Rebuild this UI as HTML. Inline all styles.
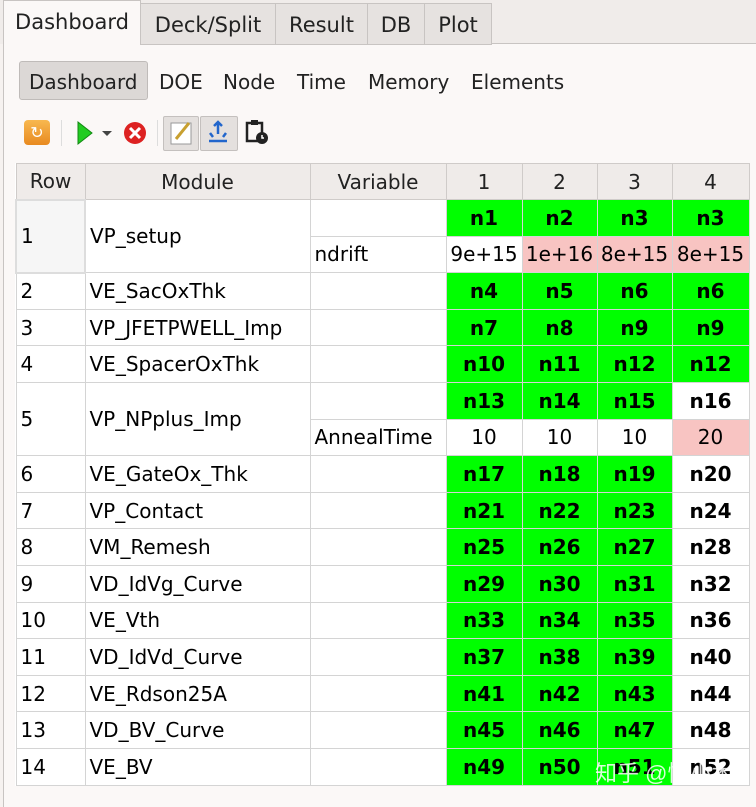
<!DOCTYPE html>
<html><head><style>
body{margin:0;width:756px;height:806px;background:#f6f2f0;font-family:"DejaVu Sans","Liberation Sans",sans-serif;overflow:hidden;position:relative}
.tabs{position:absolute;left:0;top:0;width:756px;height:44px;background:#f0ecea}
.tab{position:absolute;top:3px;height:40px;background:#e6e2e0;border:1px solid #c8c4c2;font-size:21px;line-height:42px;text-align:center;color:#222}
.panel{position:absolute;left:3px;top:43px;width:753px;height:763px;background:#fbf8f7;border-left:1px solid #c8c4c2;border-top:1px solid #c8c4c2}
.sub{position:absolute;top:82px;font-size:20px;color:#222;transform:translateY(-50%)}
table{position:absolute;left:15px;top:163px;width:733px;border-collapse:collapse;table-layout:fixed;background:#fff;font-size:20px}
td{border:1px solid #d4d4d4;padding:0 4px;height:36.6px;box-sizing:border-box;white-space:nowrap;overflow:hidden}
th{font-weight:normal;background:#efebe9;border:1px solid #cfcbc9;height:36px;box-sizing:border-box;color:#222}
.g{background:#00ff00;font-weight:bold;text-align:center}
.w{font-weight:bold;text-align:center}
.p{background:#f8c4c2;text-align:center;padding:0}
.c{text-align:center;padding:0}
</style></head><body>
<div class="tabs"></div>
<div class="panel"></div>
<div class="tab" style="left:3px;top:0;height:44px;width:136px;background:#fbf8f7;border-bottom:none">Dashboard</div>
<div class="tab" style="left:140px;width:134px">Deck/Split</div>
<div class="tab" style="left:275px;width:91px">Result</div>
<div class="tab" style="left:367px;width:56px">DB</div>
<div class="tab" style="left:424px;width:66px">Plot</div>
<div style="position:absolute;left:19px;top:61px;width:127px;height:37px;background:#dcd8d6;border:1px solid #bfbbb9;border-radius:3px"></div>
<div class="sub" style="left:29px">Dashboard</div>
<div class="sub" style="left:159px">DOE</div>
<div class="sub" style="left:223px">Node</div>
<div class="sub" style="left:297px">Time</div>
<div class="sub" style="left:368px">Memory</div>
<div class="sub" style="left:471px">Elements</div>
<div style="position:absolute;left:24px;top:120px;width:26px;height:25px;background:linear-gradient(#f8b850,#e88a20);border-radius:4px;color:#fff;font-size:16px;text-align:center;line-height:25px">↻</div>
<div style="position:absolute;left:61px;top:120px;width:1px;height:26px;background:#ddd"></div>
<svg style="position:absolute;left:76px;top:120px" width="70" height="26"><polygon points="2,2 16,13 2,24" fill="#22cc22" stroke="#118811"/><polygon points="26,11 36,11 31,16" fill="#444"/><circle cx="59" cy="13" r="11" fill="#dd2222"/><path d="M54 8l10 10M64 8l-10 10" stroke="#fff" stroke-width="3"/></svg>
<div style="position:absolute;left:157px;top:120px;width:1px;height:26px;background:#ddd"></div>
<div style="position:absolute;left:163px;top:116px;width:34px;height:33px;background:#e4e0de;border:1px solid #c4c0be;border-radius:2px"></div>
<div style="position:absolute;left:200px;top:116px;width:36px;height:33px;background:#e4e0de;border:1px solid #c4c0be;border-radius:2px"></div>
<svg style="position:absolute;left:168px;top:119px" width="28" height="28"><rect x="3" y="4" width="20" height="21" fill="#fff" stroke="#999"/><path d="M8 20L21 4" stroke="#c8a030" stroke-width="3"/></svg>
<svg style="position:absolute;left:204px;top:119px" width="28" height="28"><path d="M14 3v12M10 7l4-4 4 4M6 14l3 4M22 14l-3 4M5 22h18" stroke="#2266cc" stroke-width="2.5" fill="none"/></svg>
<svg style="position:absolute;left:244px;top:118px" width="26" height="28"><rect x="3" y="5" width="15" height="18" fill="none" stroke="#222" stroke-width="2.5"/><rect x="7" y="2" width="7" height="5" fill="#222"/><circle cx="18" cy="20" r="6" fill="#222"/><path d="M18 17v3h2" stroke="#fff" stroke-width="1.5" fill="none"/></svg>
<table>
<colgroup><col style="width:69px"><col style="width:225px"><col style="width:136px"><col style="width:76px"><col style="width:75px"><col style="width:75px"><col style="width:77px"></colgroup>
<tr><th>Row</th><th>Module</th><th>Variable</th><th>1</th><th>2</th><th>3</th><th>4</th></tr>
<tr><td rowspan="2" style="background:#f6f6f6;border:2px solid #ddd">1</td><td rowspan="2">VP_setup</td><td></td><td class="g">n1</td><td class="g">n2</td><td class="g">n3</td><td class="g">n3</td></tr>
<tr><td>ndrift</td><td class="c">9e+15</td><td class="p">1e+16</td><td class="p">8e+15</td><td class="p">8e+15</td></tr>
<tr><td>2</td><td>VE_SacOxThk</td><td></td><td class="g">n4</td><td class="g">n5</td><td class="g">n6</td><td class="g">n6</td></tr>
<tr><td>3</td><td>VP_JFETPWELL_Imp</td><td></td><td class="g">n7</td><td class="g">n8</td><td class="g">n9</td><td class="g">n9</td></tr>
<tr><td>4</td><td>VE_SpacerOxThk</td><td></td><td class="g">n10</td><td class="g">n11</td><td class="g">n12</td><td class="g">n12</td></tr>
<tr><td rowspan="2">5</td><td rowspan="2">VP_NPplus_Imp</td><td></td><td class="g">n13</td><td class="g">n14</td><td class="g">n15</td><td class="w">n16</td></tr>
<tr><td>AnnealTime</td><td class="c">10</td><td class="c">10</td><td class="c">10</td><td class="p">20</td></tr>
<tr><td>6</td><td>VE_GateOx_Thk</td><td></td><td class="g">n17</td><td class="g">n18</td><td class="g">n19</td><td class="w">n20</td></tr>
<tr><td>7</td><td>VP_Contact</td><td></td><td class="g">n21</td><td class="g">n22</td><td class="g">n23</td><td class="w">n24</td></tr>
<tr><td>8</td><td>VM_Remesh</td><td></td><td class="g">n25</td><td class="g">n26</td><td class="g">n27</td><td class="w">n28</td></tr>
<tr><td>9</td><td>VD_IdVg_Curve</td><td></td><td class="g">n29</td><td class="g">n30</td><td class="g">n31</td><td class="w">n32</td></tr>
<tr><td>10</td><td>VE_Vth</td><td></td><td class="g">n33</td><td class="g">n34</td><td class="g">n35</td><td class="w">n36</td></tr>
<tr><td>11</td><td>VD_IdVd_Curve</td><td></td><td class="g">n37</td><td class="g">n38</td><td class="g">n39</td><td class="w">n40</td></tr>
<tr><td>12</td><td>VE_Rdson25A</td><td></td><td class="g">n41</td><td class="g">n42</td><td class="g">n43</td><td class="w">n44</td></tr>
<tr><td>13</td><td>VD_BV_Curve</td><td></td><td class="g">n45</td><td class="g">n46</td><td class="g">n47</td><td class="w">n48</td></tr>
<tr><td>14</td><td>VE_BV</td><td></td><td class="g">n49</td><td class="g">n50</td><td class="g">n51</td><td class="w">n52</td></tr>
</table>
<div style="position:absolute;left:595px;top:756px;font-size:22px;color:rgba(255,255,255,.85);font-family:'Liberation Sans','Noto Sans CJK SC',sans-serif">知乎 @懒小木</div>
</body></html>
